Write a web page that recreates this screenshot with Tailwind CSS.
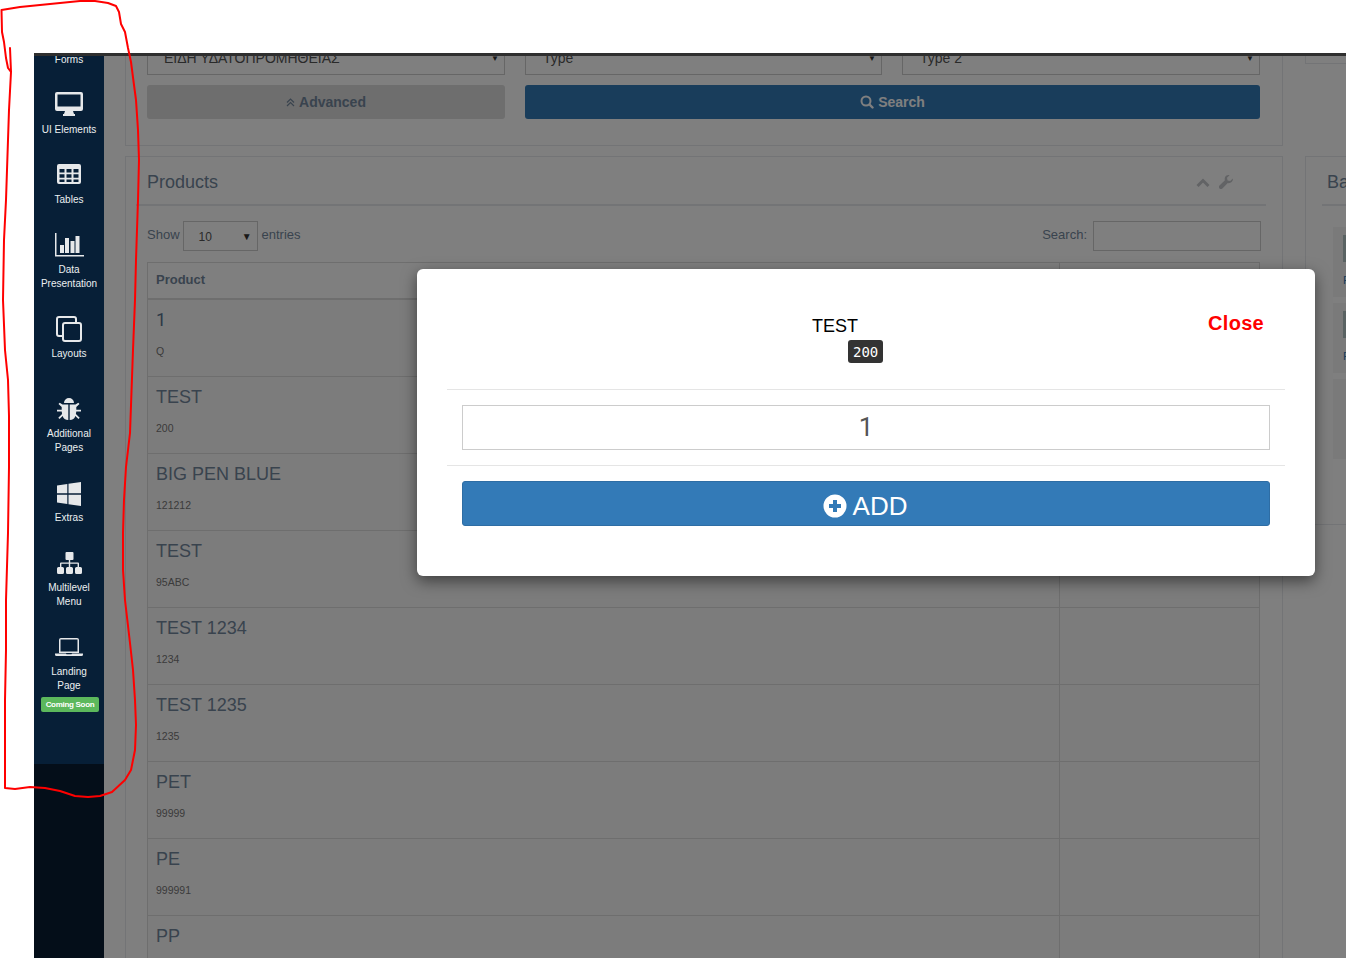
<!DOCTYPE html>
<html lang="el">
<head>
  <meta charset="UTF-8" />
  <title>Products</title>
  <script src="https://cdn.jsdelivr.net/npm/@tailwindcss/browser@4"></script>
</head>
<body class="bg-white font-['Liberation_Sans',Arial,sans-serif]">
  <div class="relative h-[958px] w-[1346px] overflow-hidden pt-[53px] pl-[34px]">
    <div class="flex h-[905px] border-t-[3px] border-[#2f2f2f]">

      <!-- sidebar -->
      <nav class="flex h-[902px] w-[70px] shrink-0 flex-col overflow-hidden bg-[#040e19] text-center text-[10px] leading-[14px] text-[#ecf0f1]">
        <div class="h-[708px] shrink-0 bg-[#071f37]">
          <div class="-mt-[3px] h-[14px]">Forms</div>

          <a class="block">
            <div class="flex h-[56px] items-center justify-center pt-[18px]">
              <svg width="28" height="24" viewBox="0 0 28 24"><path fill="#e6e8ea" fill-rule="evenodd" d="M2 0h24a2 2 0 0 1 2 2v15a2 2 0 0 1-2 2h-8l1 3h1v2H8v-2h1l1-3H2a2 2 0 0 1-2-2V2a2 2 0 0 1 2-2zm.5 2.500v12h23v-12z"/></svg>
            </div>
            <div>UI Elements</div>
          </a>

          <a class="block">
            <div class="flex h-[56px] items-center justify-center pt-[18px]">
              <svg width="24" height="20" viewBox="0 0 24 20"><path fill="#e6e8ea" fill-rule="evenodd" d="M2 0h20a2 2 0 0 1 2 2v16a2 2 0 0 1-2 2H2a2 2 0 0 1-2-2V2a2 2 0 0 1 2-2zm.5 5v3.500h5V5zm7 0v3.500h5V5zm7 0v3.500h5V5zm-14 5.200v3.500h5v-3.500zm7 0v3.500h5v-3.500zm7 0v3.500h5v-3.500zm-14 5.200v2.600h5v-2.600zm7 0v2.600h5v-2.600zm7 0v2.600h5v-2.600z"/></svg>
            </div>
            <div>Tables</div>
          </a>

          <a class="block">
            <div class="flex h-[56px] items-center justify-center pt-[20px]">
              <svg width="30" height="24" viewBox="0 0 30 24"><path fill="#e6e8ea" d="M1 0h1.500v22H30v1.500H1zM6 12h4v8H6zM11 5h4v15h-4zM16.500 8h4v12h-4zM21.500 3h4v17h-4z"/></svg>
            </div>
            <div>Data<br />Presentation</div>
          </a>

          <a class="block">
            <div class="flex h-[56px] items-center justify-center pt-[20px]">
              <svg width="26" height="26" viewBox="0 0 26 26"><path fill="none" stroke="#e6e8ea" stroke-width="2" d="M6 20H3a2 2 0 0 1-2-2V3a2 2 0 0 1 2-2h15a2 2 0 0 1 2 2v3"/><rect x="7" y="7" width="18" height="18" rx="2" fill="none" stroke="#e6e8ea" stroke-width="2"/></svg>
            </div>
            <div>Layouts</div>
          </a>

          <a class="block">
            <div class="flex h-[66px] items-center justify-center pt-[30px]">
              <svg width="24" height="24" viewBox="0 0 24 24"><path fill="#e6e8ea" d="M7 6a5 5 0 0 1 10 0zM5.500 7.500h5.800V23c-3 0-5-1.500-5.600-4l-3.200 3-1.200-1.200 3.800-3.800-.4-2.500H0v-1.700h4.700V10L1.500 7l1.200-1.200zM18.500 7.500h-5.800V23c3 0 5-1.500 5.600-4l3.200 3 1.200-1.200-3.800-3.800.4-2.500H24v-1.700h-4.700V10l3.200-3-1.200-1.200z"/></svg>
            </div>
            <div>Additional<br />Pages</div>
          </a>

          <a class="block">
            <div class="flex h-[56px] items-center justify-center pt-[21px]">
              <svg width="24" height="24" viewBox="0 0 24 24"><path fill="#e6e8ea" d="M0 3.400 10.300 2v9.300H0zM11.500 1.800 24 0v11.300H11.500zM0 12.800h10.300v9.300L0 20.600zM11.500 12.800H24V24l-12.500-1.800z"/></svg>
            </div>
            <div>Extras</div>
          </a>

          <a class="block">
            <div class="flex h-[56px] items-center justify-center pt-[20px]">
              <svg width="25" height="22" viewBox="0 0 25 22"><path fill="#e6e8ea" d="M9.500 0h6a1 1 0 0 1 1 1v6a1 1 0 0 1-1 1h-2.300v2.400H21a1 1 0 0 1 1 1V15h-1.400v-3.200h-7.400V15h-1.400v-3.200H4.400V15H3v-3.600a1 1 0 0 1 1-1h7.800V8H9.500a1 1 0 0 1-1-1V1a1 1 0 0 1 1-1zM1.500 15h4A1.500 1.500 0 0 1 7 16.500v4A1.500 1.500 0 0 1 5.500 22h-4A1.500 1.500 0 0 1 0 20.500v-4A1.500 1.500 0 0 1 1.500 15zM10.500 15h4a1.500 1.500 0 0 1 1.500 1.500v4a1.500 1.500 0 0 1-1.500 1.500h-4A1.500 1.500 0 0 1 9 20.500v-4a1.500 1.500 0 0 1 1.500-1.500zM19.500 15h4a1.500 1.500 0 0 1 1.500 1.500v4a1.500 1.500 0 0 1-1.500 1.500h-4a1.500 1.500 0 0 1-1.500-1.500v-4a1.500 1.500 0 0 1 1.500-1.500z"/></svg>
            </div>
            <div>Multilevel<br />Menu</div>
          </a>

          <a class="block">
            <div class="flex h-[56px] items-center justify-center pt-[20px]">
              <svg width="28" height="18" viewBox="0 0 28 18"><path fill="#e6e8ea" fill-rule="evenodd" d="M6 0h16a2 2 0 0 1 2 2v13H4V2a2 2 0 0 1 2-2zm-.500 1.500v12h17v-12zM0 15.500h11l.500.800h5l.500-.8h11v1a1.500 1.500 0 0 1-1.500 1.500h-25A1.500 1.500 0 0 1 0 16.500z"/></svg>
            </div>
            <div>Landing<br />Page</div>
            <div class="mt-[4px] ml-[7px] flex h-[15px] w-[58px] items-center justify-center rounded-[2px] bg-[#5cb85c] text-[8px] font-bold tracking-[-0.3px] whitespace-nowrap text-white">Coming Soon</div>
          </a>
        </div>
      </nav>

      <!-- main content -->
      <main class="relative h-[902px] flex-1 overflow-hidden bg-white text-[#73879c]">
        <div class="flex gap-[22px] pl-[21px]">
          <div class="w-[1158px] shrink-0">
            <div class="h-[90px] border border-t-0 border-[#e6e9ed] px-[21px]">
              <div class="flex gap-[20px]">
                <div class="relative flex h-[19px] w-[358px] items-end overflow-hidden border border-t-0 border-[#ccc] pl-[16px] text-[14px] leading-[16px] text-[#555]"><span class="mb-[8px]">ΕΙΔΗ ΥΔΑΤΟΠΡΟΜΗΘΕΙΑΣ</span><span class="absolute -top-[1px] right-[5px] text-[8px] leading-[8px] text-[#333]">▼</span></div>
                <div class="relative flex h-[19px] w-[357px] items-end overflow-hidden border border-t-0 border-[#ccc] pl-[17px] text-[14px] leading-[16px] text-[#555]"><span class="mb-[8px]">Type</span><span class="absolute -top-[1px] right-[5px] text-[8px] leading-[8px] text-[#333]">▼</span></div>
                <div class="relative flex h-[19px] w-[358px] items-end overflow-hidden border border-t-0 border-[#ccc] pl-[17px] text-[14px] leading-[16px] text-[#555]"><span class="mb-[8px]">Type 2</span><span class="absolute -top-[1px] right-[5px] text-[8px] leading-[8px] text-[#333]">▼</span></div>
              </div>
              <div class="mt-[10px] flex gap-[20px]">
                <button class="flex h-[34px] w-[358px] items-center justify-center gap-1 rounded-[3px] bg-[#dcdcdc] text-[14px] font-bold">
                  <svg width="9" height="9" viewBox="0 0 9 9"><path fill="none" stroke="#73879c" stroke-width="1.200" d="M1 4.500l3.500-3.500L8 4.500M1 8l3.500-3.500L8 8"/></svg>
                  Advanced
                </button>
                <button class="flex h-[34px] w-[735px] items-center justify-center gap-1 rounded-[3px] bg-[#337ab7] text-[14px] font-bold text-white">
                  <svg width="14" height="14" viewBox="0 0 14 14"><circle cx="6" cy="6" r="4.500" fill="none" stroke="#fff" stroke-width="2"/><path stroke="#fff" stroke-width="2.400" stroke-linecap="round" d="M9.500 9.500l3 3"/></svg>
                  Search
                </button>
              </div>
            </div>

            <div class="mt-[10px] h-[900px] border border-[#e6e9ed] pr-[16px] pl-[10px]">
              <div class="flex h-[49px] items-center justify-between border-b-2 border-[#e6e9ed] pt-[3px] pr-[33px] pl-[11px]">
                <span class="text-[18px]">Products</span>
                <span class="flex items-center gap-[9px]">
                  <svg width="14" height="9" viewBox="0 0 14 9"><path fill="none" stroke="#c5c7cb" stroke-width="3" d="M1.500 8 7 2.500 12.500 8"/></svg>
                  <svg width="14" height="14" viewBox="0 0 14 14"><path fill="#c5c7cb" d="M13.800 3.400 11.200 6 8.600 5.400 8 2.800 10.600.2C8.800-.4 6.800.5 6 2.300c-.4 1-.4 2-.1 2.900L.5 10.600a1.900 1.900 0 0 0 2.900 2.900l5.400-5.400c2.600.9 5.800-1.600 5-4.700z"/></svg>
                </span>
              </div>
              <div class="flex h-[56px] justify-between pt-[15px] pr-[5px] pl-[11px] text-[13px]">
                <div class="flex items-start gap-[3px]">
                  <span class="pt-[4px]">Show</span>
                  <div class="flex h-[30px] w-[75px] items-center justify-between border border-[#ccc] pr-[5px] pl-[15px] text-[12px] text-[#555]"><span class="pt-[1px]">10</span><span class="text-[10px] text-[#333]">▼</span></div>
                  <span class="pt-[4px] pl-[1px]">entries</span>
                </div>
                <div class="flex items-start gap-[6px]">
                  <span class="pt-[4px]">Search:</span>
                  <div class="h-[30px] w-[168px] border border-[#ccc]"></div>
                </div>
              </div>

              <div class="ml-[11px] w-[1113px] border border-[#ddd]">
                <div class="flex h-[37px] border-b-2 border-[#ddd] text-[13px] font-bold">
                  <div class="flex w-[912px] items-center border-r border-[#ddd] pb-[2px] pl-[8px]">Product</div>
                  <div class="flex-1"></div>
                </div>
                <div class="flex h-[77px] border-b border-[#ddd] bg-[#f9f9f9]"><div class="w-[912px] border-r border-[#ddd] pt-[7px] pl-[8px]"><div class="font-['Roboto',sans-serif] text-[18px] leading-[25px] text-[#5a738e]">1</div><div class="mt-[12px] text-[10.500px] leading-[14px] text-[#777]">Q</div></div></div>
                <div class="flex h-[77px] border-b border-[#ddd] bg-[#f9f9f9]"><div class="w-[912px] border-r border-[#ddd] pt-[8px] pl-[8px]"><div class="text-[18px] leading-[25px]">TEST</div><div class="mt-[11px] text-[10.500px] leading-[14px] text-[#777]">200</div></div></div>
                <div class="flex h-[77px] border-b border-[#ddd] bg-[#f9f9f9]"><div class="w-[912px] border-r border-[#ddd] pt-[8px] pl-[8px]"><div class="text-[18px] leading-[25px]">BIG PEN BLUE</div><div class="mt-[11px] text-[10.500px] leading-[14px] text-[#777]">121212</div></div></div>
                <div class="flex h-[77px] border-b border-[#ddd] bg-[#f9f9f9]"><div class="w-[912px] border-r border-[#ddd] pt-[8px] pl-[8px]"><div class="text-[18px] leading-[25px]">TEST</div><div class="mt-[11px] text-[10.500px] leading-[14px] text-[#777]">95ABC</div></div></div>
                <div class="flex h-[77px] border-b border-[#ddd] bg-[#f9f9f9]"><div class="w-[912px] border-r border-[#ddd] pt-[8px] pl-[8px]"><div class="text-[18px] leading-[25px]">TEST 1234</div><div class="mt-[11px] text-[10.500px] leading-[14px] text-[#777]">1234</div></div></div>
                <div class="flex h-[77px] border-b border-[#ddd] bg-[#f9f9f9]"><div class="w-[912px] border-r border-[#ddd] pt-[8px] pl-[8px]"><div class="text-[18px] leading-[25px]">TEST 1235</div><div class="mt-[11px] text-[10.500px] leading-[14px] text-[#777]">1235</div></div></div>
                <div class="flex h-[77px] border-b border-[#ddd] bg-[#f9f9f9]"><div class="w-[912px] border-r border-[#ddd] pt-[8px] pl-[8px]"><div class="text-[18px] leading-[25px]">PET</div><div class="mt-[11px] text-[10.500px] leading-[14px] text-[#777]">99999</div></div></div>
                <div class="flex h-[77px] border-b border-[#ddd] bg-[#f9f9f9]"><div class="w-[912px] border-r border-[#ddd] pt-[8px] pl-[8px]"><div class="text-[18px] leading-[25px]">PE</div><div class="mt-[11px] text-[10.500px] leading-[14px] text-[#777]">999991</div></div></div>
                <div class="flex h-[77px] border-b border-[#ddd] bg-[#f9f9f9]"><div class="w-[912px] border-r border-[#ddd] pt-[8px] pl-[8px]"><div class="text-[18px] leading-[25px]">PP</div></div></div>
              </div>
            </div>
          </div>

          <div class="w-[200px] shrink-0">
            <div class="h-[8px] border border-t-0 border-[#e6e9ed]"></div>
            <div class="mt-[92px] h-[369px] border border-[#e6e9ed] pl-[16px]">
              <div class="flex h-[49px] items-center border-b-2 border-[#e6e9ed] pt-[3px] pl-[5px] text-[18px] whitespace-nowrap">Basket</div>
              <div class="mt-[21px] ml-[11px] flex flex-col gap-[6px]">
                <div class="h-[70px] bg-[#f5f5f5] pt-[8px] pl-[10px]"><div class="h-[27px] w-[50px] bg-[#b5c6c6]"></div><div class="mt-[11px] text-[11px] leading-[14px] text-[#337ab7]">P</div></div>
                <div class="h-[70px] bg-[#f5f5f5] pt-[8px] pl-[10px]"><div class="h-[27px] w-[50px] bg-[#b5c6c6]"></div><div class="mt-[11px] text-[11px] leading-[14px] text-[#337ab7]">P</div></div>
                <div class="h-[80px] bg-[#f5f5f5]"></div>
              </div>
            </div>
          </div>
        </div>

        <!-- backdrop -->
        <div class="absolute inset-0 bg-black/50"></div>

        <!-- modal -->
        <div class="absolute top-[213px] left-[313px] h-[307px] w-[898px] rounded-[6px] bg-white px-[30px] shadow-[0_5px_15px_rgba(0,0,0,0.5)]">
          <div class="relative h-[121px] border-b border-[#e5e5e5]">
            <div class="pt-[45px] pl-[365px] text-[18px] leading-[24px] text-black">TEST</div>
            <code class="absolute top-[71px] left-[401px] rounded-[3px] bg-[#333] px-[5px] pt-[3px] pb-[1px] font-['DejaVu_Sans_Mono',monospace] text-[14px] leading-[19px] text-white">200</code>
            <span class="absolute top-[42px] right-[21px] text-[20px] leading-[24px] font-bold tracking-[0.3px] text-[#ff0000]">Close</span>
          </div>
          <div class="h-[76px] border-b border-[#e5e5e5] px-[15px] pt-[15px]">
            <div class="flex h-[45px] items-center justify-center border border-[#ccc] font-['Roboto',sans-serif] text-[26px] text-[#555]">1</div>
          </div>
          <div class="px-[15px] pt-[15px]">
            <button class="flex h-[45px] w-full items-center justify-center gap-[6px] rounded-[3px] border border-[#2e6da4] bg-[#337ab7] pt-[5px] pr-[2px] text-[26px] text-white">
              <svg width="24" height="24" viewBox="0 0 24 24"><path fill="#fff" fill-rule="evenodd" d="M12 .5a11.500 11.500 0 1 1 0 23 11.500 11.500 0 0 1 0-23zM10 6v4H6v4h4v4h4v-4h4v-4h-4V6z"/></svg>
              ADD
            </button>
          </div>
        </div>
      </main>
    </div>

    <!-- red pen annotation drawn over the screenshot -->
    <svg class="pointer-events-none absolute top-0 left-0" width="1346" height="958" viewBox="0 0 1346 958" fill="none">
      <path stroke="#ff0000" stroke-width="2" stroke-linejoin="round" stroke-linecap="round" d="M10 48 11 72 8 68 6 58 4 42 2 32 1.500 10 20 7 50 4 80 1 95 1 108 3 116 6 119 12 121 24 125 32 128 48 131 62 134 85 136 100 138 130 139 160 138 200 136 260 135 300 133 350 130 433 126 467 124 500 123 533 123 570 125 600 130 643 133 670 135 700 136 725 135 750 131 770 125 780 112 792 100 796 88 797 75 796 60 791 45 788 30 787 15 789 5 788 5 750 5 700 6 650 6 600 8 533 9 467 9 416 8 380 5 350 3 300 4 240 6 200 9 110 11 72"/>
    </svg>
  </div>
</body>
</html>
